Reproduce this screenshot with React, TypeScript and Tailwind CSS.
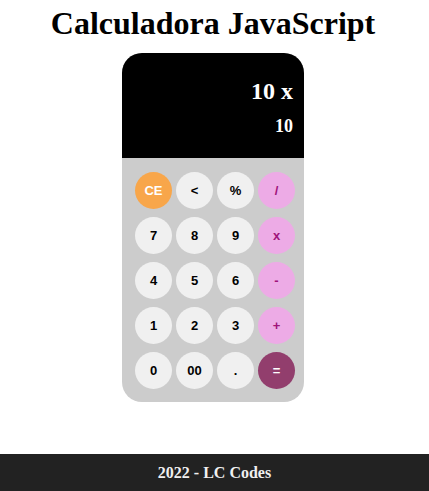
import React from "react";

type Btn = { label: string; kind: "ce" | "num" | "op" | "eq" };

const buttons: Btn[] = [
  { label: "CE", kind: "ce" },
  { label: "<", kind: "num" },
  { label: "%", kind: "num" },
  { label: "/", kind: "op" },
  { label: "7", kind: "num" },
  { label: "8", kind: "num" },
  { label: "9", kind: "num" },
  { label: "x", kind: "op" },
  { label: "4", kind: "num" },
  { label: "5", kind: "num" },
  { label: "6", kind: "num" },
  { label: "-", kind: "op" },
  { label: "1", kind: "num" },
  { label: "2", kind: "num" },
  { label: "3", kind: "num" },
  { label: "+", kind: "op" },
  { label: "0", kind: "num" },
  { label: "00", kind: "num" },
  { label: ".", kind: "num" },
  { label: "=", kind: "eq" },
];

function cls(kind: Btn["kind"]) {
  switch (kind) {
    case "ce":
      return "bg-[#f8a64a] text-white";
    case "op":
      return "bg-[#edabe6] text-[#a0147a]";
    case "eq":
      return "bg-[#923e6d] text-white";
    default:
      return "bg-[#f0f0f0] text-black";
  }
}

export default function App() {
  return (
    <div className="min-h-screen flex flex-col bg-white font-['Liberation_Serif',serif]">
      <div className="pr-[3px]">
        <h1 className="mt-[5px] mb-[11px] text-center text-[32px] font-bold leading-[37px] text-black">
          Calculadora JavaScript
        </h1>
        <div className="mx-auto w-[182px] rounded-[20px] overflow-hidden bg-[#cccccc]">
          <div className="h-[105px] bg-black text-white text-right pr-[11px] pt-[26px]">
            <div className="text-[24px] font-bold leading-[24px]">10 x</div>
            <div className="mt-[14px] text-[18px] font-bold leading-[18px]">10</div>
          </div>
          <div className="grid grid-cols-[repeat(4,37px)] gap-x-[4px] gap-y-[8px] pl-[13px] pt-[14px] pb-[13px]">
            {buttons.map((b) => (
              <button
                key={b.label}
                className={`w-[37px] h-[37px] rounded-full flex items-center justify-center font-['Liberation_Sans',Arial,sans-serif] text-[13px] font-bold ${cls(b.kind)}`}
              >
                {b.label}
              </button>
            ))}
          </div>
        </div>
      </div>
      <footer className="mt-auto h-[37px] bg-[#222222] flex items-center justify-center text-[16px] font-bold text-[#f0f0f0]">
        2022 - LC Codes
      </footer>
    </div>
  );
}
